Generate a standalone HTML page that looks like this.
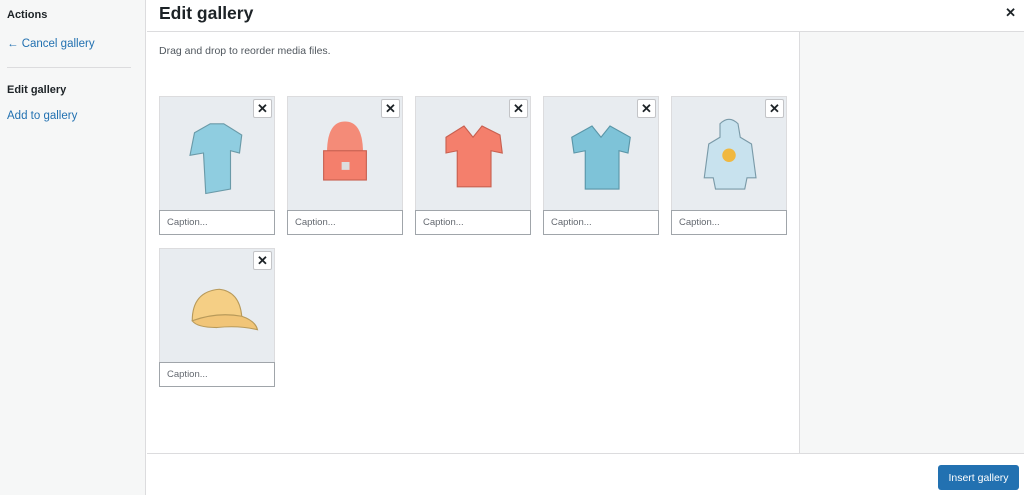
<!DOCTYPE html>
<html><head><meta charset="utf-8"><style>
*{box-sizing:border-box;margin:0;padding:0}
body{width:1024px;height:495px;overflow:hidden;background:#fff;font-family:"Liberation Sans",sans-serif;position:relative;color:#1d2327}
.side{position:absolute;left:0;top:0;width:146px;height:495px;background:#f6f7f7;border-right:1px solid #dcdcde}
.side .h{position:absolute;left:7px;font-size:11px;font-weight:bold;color:#1d2327}
.side a{position:absolute;left:7px;font-size:11.5px;color:#2271b1;text-decoration:none}
.sep{position:absolute;left:7px;top:67px;width:124px;height:1px;background:#dcdcde}
.title{position:absolute;left:159px;top:3px;font-size:17.5px;font-weight:bold}
.close{position:absolute;right:8px;top:5px;font-size:13px;font-weight:bold}
.hline{position:absolute;left:147px;top:31px;width:877px;height:1px;background:#dcdcde}
.rside{position:absolute;left:799px;top:32px;width:225px;height:421px;background:#f6f7f7;border-left:1px solid #dcdcde}
.foot{position:absolute;left:147px;top:453px;width:877px;height:1px;background:#dcdcde}
.btn{position:absolute;left:938px;top:465px;width:81px;height:25px;background:#2271b1;border-radius:3px;color:#fff;font-size:10.5px;text-align:center;line-height:26px}
.desc{position:absolute;left:159px;top:45px;font-size:10.5px;color:#50575e}
.tile{position:absolute;width:116px;height:139px}
.img{position:absolute;left:0;top:0;width:116px;height:115px;background:#e8ecf0;border:1px solid #dcdcde}
.cap{position:absolute;left:0;top:114px;width:116px;height:25px;border:1px solid #a0a5aa;background:#fff;font-size:9.5px;color:#646970;padding:6px 7px}
.x{position:absolute;right:3px;top:3px;width:19px;height:19px;background:#fff;border:1px solid #c3c4c7;border-radius:2px;font-size:13px;font-weight:bold;text-align:center;line-height:18px;color:#1d2327}
.tile svg{position:absolute;left:13px;top:12px}
</style></head><body>
<div class="side">
<div class="h" style="top:9px">Actions</div>
<a style="top:38px">← Cancel gallery</a>
<div class="sep"></div>
<div class="h" style="top:84px">Edit gallery</div>
<a style="top:110px">Add to gallery</a>
</div>
<div class="title">Edit gallery</div>
<div class="close">✕</div>
<div class="hline"></div>
<div class="rside"></div>
<div class="desc">Drag and drop to reorder media files.</div>
<div class="foot"></div>
<div class="btn">Insert gallery</div>

<div class="tile" style="left:159px;top:96px"><div class="img"></div>
<svg width="90" height="90" viewBox="0 0 80 80"><path d="M20 22 L34 14 L46 14 L62 24 L60 40 L52 38 L52 72 L30 76 L28 40 L16 42 Z" fill="#8fcde0" stroke="#6a9aa8"/></svg>
<div class="x">✕</div><div class="cap">Caption...</div></div>

<div class="tile" style="left:287px;top:96px"><div class="img"></div>
<svg width="90" height="90" viewBox="0 0 80 80"><path d="M24 40 Q24 12 40 12 Q56 12 56 40 Z" fill="#f48b78"/><rect x="21" y="38" width="38" height="26" fill="#f47f6c" stroke="#c86050"/><rect x="37" y="48" width="7" height="7" fill="#ddd"/></svg>
<div class="x">✕</div><div class="cap">Caption...</div></div>

<div class="tile" style="left:415px;top:96px"><div class="img"></div>
<svg width="90" height="90" viewBox="0 0 80 80"><path d="M16 26 L32 16 L40 26 L48 16 L64 24 L66 40 L56 38 L56 70 L26 70 L26 38 L16 40 Z" fill="#f47f6c" stroke="#c86050"/></svg>
<div class="x">✕</div><div class="cap">Caption...</div></div>

<div class="tile" style="left:543px;top:96px"><div class="img"></div>
<svg width="90" height="90" viewBox="0 0 80 80"><path d="M14 26 L32 16 L40 26 L48 16 L66 26 L64 40 L56 38 L56 72 L26 72 L26 38 L16 40 Z" fill="#7ec3d8" stroke="#5a96a8"/></svg>
<div class="x">✕</div><div class="cap">Caption...</div></div>

<div class="tile" style="left:671px;top:96px"><div class="img"></div>
<svg width="90" height="90" viewBox="0 0 80 80"><path d="M32 14 Q40 6 48 14 L50 26 L60 32 L64 62 L56 62 L54 72 L28 72 L26 62 L18 62 L22 32 L32 26 Z" fill="#c8e2ee" stroke="#7a9aa8"/><circle cx="40" cy="42" r="6" fill="#f0b840"/></svg>
<div class="x">✕</div><div class="cap">Caption...</div></div>

<div class="tile" style="left:159px;top:248px"><div class="img"></div>
<svg width="90" height="90" viewBox="0 0 80 80"><path d="M18 54 Q18 28 42 26 Q60 28 62 50 Z" fill="#f5cf85" stroke="#b89a5a"/><path d="M18 54 Q40 46 62 50 Q74 54 76 62 Q60 58 40 60 Q22 60 18 54 Z" fill="#f1c578" stroke="#b89a5a"/></svg>
<div class="x">✕</div><div class="cap">Caption...</div></div>
</body></html>
